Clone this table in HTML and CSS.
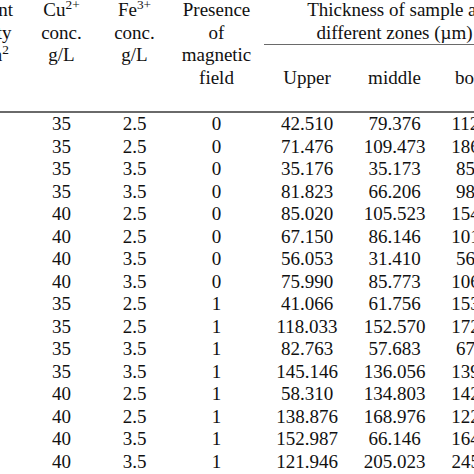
FILE: index.html
```html
<!DOCTYPE html>
<html lang="en">
<head>
<meta charset="utf-8">
<title>Thickness table</title>
<link rel="stylesheet" href="styles.css">
</head>
<body>
<div class="viewport">
<table class="data">
<colgroup>
<col class="c-cd"><col class="c-cu"><col class="c-fe"><col class="c-mf"><col class="c-up"><col class="c-mid"><col class="c-bot">
</colgroup>
<thead>
<tr class="h1">
<th rowspan="2">Current<br>density<br>A/dm<sup>2</sup></th>
<th rowspan="2">Cu<sup>2+</sup><br>conc.<br>g/L</th>
<th rowspan="2">Fe<sup>3+</sup><br>conc.<br>g/L</th>
<th rowspan="2">Presence<br>of<br>magnetic<br>field</th>
<th colspan="3" class="span">Thickness of sample at<br>different zones (µm)</th>
</tr>
<tr class="h2">
<th class="sub">Upper</th>
<th class="sub">middle</th>
<th class="sub">bottom</th>
</tr>
</thead>
<tbody>
<tr><td>2</td><td>35</td><td>2.5</td><td>0</td><td>42.510</td><td>79.376</td><td>112.384</td></tr>
<tr><td>4</td><td>35</td><td>2.5</td><td>0</td><td>71.476</td><td>109.473</td><td>186.512</td></tr>
<tr><td>2</td><td>35</td><td>3.5</td><td>0</td><td>35.176</td><td>35.173</td><td>85.307</td></tr>
<tr><td>4</td><td>35</td><td>3.5</td><td>0</td><td>81.823</td><td>66.206</td><td>98.240</td></tr>
<tr><td>2</td><td>40</td><td>2.5</td><td>0</td><td>85.020</td><td>105.523</td><td>154.602</td></tr>
<tr><td>4</td><td>40</td><td>2.5</td><td>0</td><td>67.150</td><td>86.146</td><td>101.215</td></tr>
<tr><td>2</td><td>40</td><td>3.5</td><td>0</td><td>56.053</td><td>31.410</td><td>56.734</td></tr>
<tr><td>4</td><td>40</td><td>3.5</td><td>0</td><td>75.990</td><td>85.773</td><td>106.829</td></tr>
<tr><td>2</td><td>35</td><td>2.5</td><td>1</td><td>41.066</td><td>61.756</td><td>153.447</td></tr>
<tr><td>4</td><td>35</td><td>2.5</td><td>1</td><td>118.033</td><td>152.570</td><td>172.305</td></tr>
<tr><td>2</td><td>35</td><td>3.5</td><td>1</td><td>82.763</td><td>57.683</td><td>67.912</td></tr>
<tr><td>4</td><td>35</td><td>3.5</td><td>1</td><td>145.146</td><td>136.056</td><td>139.584</td></tr>
<tr><td>2</td><td>40</td><td>2.5</td><td>1</td><td>58.310</td><td>134.803</td><td>142.367</td></tr>
<tr><td>4</td><td>40</td><td>2.5</td><td>1</td><td>138.876</td><td>168.976</td><td>122.853</td></tr>
<tr><td>2</td><td>40</td><td>3.5</td><td>1</td><td>152.987</td><td>66.146</td><td>164.209</td></tr>
<tr><td>4</td><td>40</td><td>3.5</td><td>1</td><td>121.946</td><td>205.023</td><td>245.118</td></tr>
</tbody>
</table>
</div>
</body>
</html>
```
FILE: styles.css
```css
html, body {
  margin: 0;
  padding: 0;
  background: #ffffff;
}

.viewport {
  width: 474px;
  height: 474px;
  overflow: hidden;
}

.data {
  border-collapse: collapse;
  table-layout: fixed;
  width: 580px;
  margin-left: -55px;
  margin-top: -1px;
  font-family: "Liberation Serif", "Times New Roman", serif;
  font-size: 19px;
  line-height: 22.5px;
  color: #111111;
}

.c-cd { width: 78px; }
.c-cu { width: 77px; }
.c-fe { width: 69px; }
.c-mf { width: 95px; }
.c-up { width: 86px; }
.c-mid { width: 89px; }
.c-bot { width: 86px; }

.data th,
.data td {
  padding: 0;
  text-align: center;
  font-weight: normal;
  white-space: nowrap;
}

.data thead th {
  vertical-align: top;
}

.h1 th.span {
  height: 44px;
  border-bottom: 1.5px solid #6a6a6a;
}

.h2 th.sub {
  height: 66px;
  vertical-align: middle;
}

.data sup {
  font-size: 0.7em;
  line-height: 0;
  vertical-align: 0.5em;
}

.data tbody td {
  height: 22.5px;
}

.data tbody tr:first-child td {
  border-top: 2.5px solid #6a6a6a;
}
```
